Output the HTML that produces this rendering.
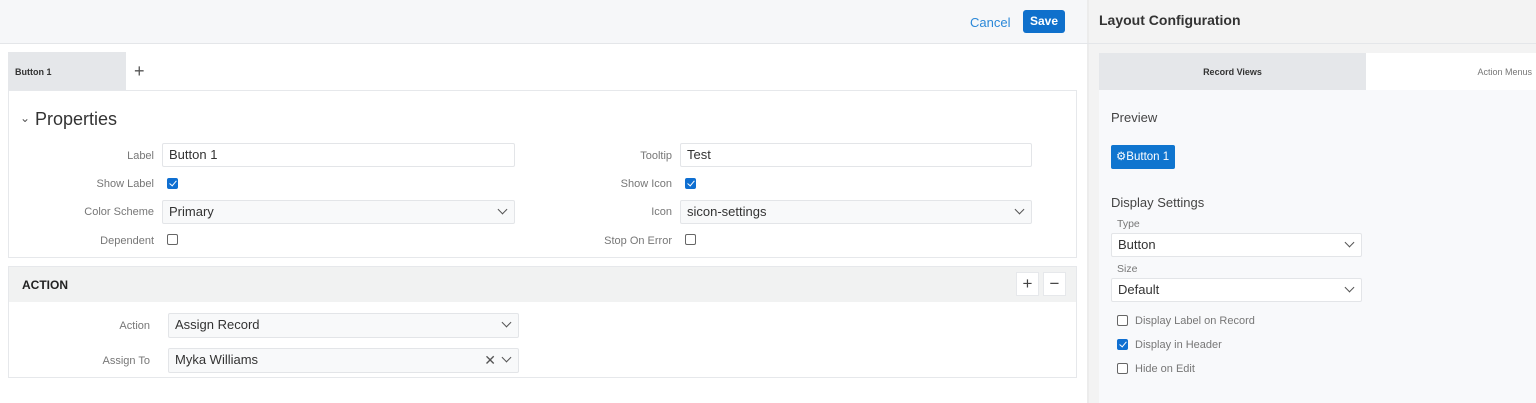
<!DOCTYPE html>
<html><head><style>
*{box-sizing:border-box;margin:0;padding:0}
body{width:1536px;height:403px;overflow:hidden;background:#fff;font-family:"Liberation Sans",sans-serif;position:relative;color:#333}
.a{position:absolute}
.lbl{position:absolute;font-size:11px;color:#777;text-align:right}
.inp{position:absolute;border:1px solid #e3e5e8;border-radius:2px;background:#fff;font-size:13px;color:#333;padding-left:6px;line-height:22px}
.sel{background:#f8f9fa}
.chev{position:absolute;right:8px;width:7px;height:7px;border-right:1.6px solid #555;border-bottom:1.6px solid #555;transform:rotate(45deg);top:5px}
.cb{position:absolute;width:11px;height:11px;border:1px solid #666;border-radius:2px;background:#fff}
.cb.on{background:#0f6fd1;border-color:#0f6fd1}
.cb.on:after{content:"";position:absolute;left:3px;top:0px;width:3px;height:6px;border-right:1.5px solid #fff;border-bottom:1.5px solid #fff;transform:rotate(40deg)}
</style></head><body>
<div class="a" style="left:0;top:0;width:1087px;height:44px;background:#f6f7f9;border-bottom:1px solid #e4e6e9"></div>
<div class="a" style="left:970px;top:15px;font-size:13px;color:#2b88d8">Cancel</div>
<div class="a" style="left:1023px;top:10px;width:42px;height:23px;background:#0f70cc;border-radius:3px;color:#fff;font-size:12px;font-weight:bold;text-align:center;line-height:23px">Save</div>

<div class="a" style="left:8px;top:52px;width:118px;height:38px;background:#e5e7ea;font-size:9px;font-weight:bold;color:#333;padding-left:7px;line-height:40px">Button 1</div>
<div class="a" style="left:134px;top:61px;font-size:18px;color:#555">+</div>

<div class="a" style="left:8px;top:90px;width:1069px;height:168px;border:1px solid #e6e8eb"></div>
<div class="a" style="left:20px;top:111px;font-size:12px;color:#555">⌄</div>
<div class="a" style="left:35px;top:109px;font-size:18px;color:#333">Properties</div>

<div class="lbl" style="left:40px;width:114px;top:150px">Label</div>
<div class="inp" style="left:162px;top:143px;width:353px;height:24px">Button 1</div>
<div class="lbl" style="left:40px;width:114px;top:178px">Show Label</div>
<div class="cb on" style="left:167px;top:178px"></div>
<div class="lbl" style="left:40px;width:114px;top:206px">Color Scheme</div>
<div class="inp sel" style="left:162px;top:200px;width:353px;height:24px">Primary<div class="chev"></div></div>
<div class="lbl" style="left:40px;width:114px;top:235px">Dependent</div>
<div class="cb" style="left:167px;top:234px"></div>

<div class="lbl" style="left:560px;width:112px;top:150px">Tooltip</div>
<div class="inp" style="left:680px;top:143px;width:352px;height:24px">Test</div>
<div class="lbl" style="left:560px;width:112px;top:178px">Show Icon</div>
<div class="cb on" style="left:685px;top:178px"></div>
<div class="lbl" style="left:560px;width:112px;top:206px">Icon</div>
<div class="inp sel" style="left:680px;top:200px;width:352px;height:24px">sicon-settings<div class="chev"></div></div>
<div class="lbl" style="left:560px;width:112px;top:235px">Stop On Error</div>
<div class="cb" style="left:685px;top:234px"></div>

<div class="a" style="left:8px;top:266px;width:1069px;height:112px;border:1px solid #e6e8eb"></div>
<div class="a" style="left:9px;top:267px;width:1067px;height:35px;background:#f1f2f2"></div>
<div class="a" style="left:22px;top:278px;font-size:12px;font-weight:bold;color:#222">ACTION</div>
<div class="a" style="left:1016px;top:272px;width:23px;height:24px;background:#fff;border:1px solid #e6e8eb;text-align:center;font-size:17px;line-height:22px;color:#444">+</div>
<div class="a" style="left:1043px;top:272px;width:23px;height:24px;background:#fff;border:1px solid #e6e8eb;text-align:center;font-size:17px;line-height:21px;color:#444">−</div>
<div class="lbl" style="left:40px;width:110px;top:320px">Action</div>
<div class="inp sel" style="left:168px;top:313px;width:351px;height:25px">Assign Record<div class="chev"></div></div>
<div class="lbl" style="left:40px;width:110px;top:355px">Assign To</div>
<div class="inp sel" style="left:168px;top:348px;width:351px;height:25px">Myka Williams<span style="position:absolute;right:22px;top:0;font-size:14px;color:#555">✕</span><div class="chev"></div></div>

<div class="a" style="left:1087px;top:0;width:449px;height:403px;background:#f3f3f3;border-left:2px solid #ececec"></div>
<div class="a" style="left:1087px;top:43px;width:449px;height:1px;background:#e4e6e9"></div>
<div class="a" style="left:1099px;top:12px;font-size:14px;font-weight:bold;color:#333">Layout Configuration</div>
<div class="a" style="left:1099px;top:53px;width:437px;height:350px;background:#f8f9fb"></div>
<div class="a" style="left:1099px;top:53px;width:267px;height:37px;background:#e5e7ea;font-size:9px;font-weight:bold;text-align:center;line-height:38px">Record Views</div>
<div class="a" style="left:1366px;top:53px;width:170px;height:37px;background:#fff;font-size:9px;color:#777;text-align:right;padding-right:4px;line-height:38px">Action Menus</div>
<div class="a" style="left:1111px;top:110px;font-size:13px;color:#444">Preview</div>
<div class="a" style="left:1111px;top:145px;width:64px;height:24px;background:#0f75cf;border-radius:2px;color:#fff;font-size:11.5px;line-height:24px;padding-left:5px">⚙Button 1</div>
<div class="a" style="left:1111px;top:195px;font-size:13px;color:#444">Display Settings</div>
<div class="a" style="left:1117px;top:218px;font-size:10.5px;color:#777">Type</div>
<div class="inp" style="left:1111px;top:233px;width:251px;height:24px">Button<div class="chev"></div></div>
<div class="a" style="left:1117px;top:263px;font-size:10.5px;color:#777">Size</div>
<div class="inp" style="left:1111px;top:278px;width:251px;height:24px">Default<div class="chev"></div></div>
<div class="cb" style="left:1117px;top:315px"></div>
<div class="a" style="left:1135px;top:315px;font-size:11px;color:#777">Display Label on Record</div>
<div class="cb on" style="left:1117px;top:339px"></div>
<div class="a" style="left:1135px;top:339px;font-size:11px;color:#777">Display in Header</div>
<div class="cb" style="left:1117px;top:363px"></div>
<div class="a" style="left:1135px;top:363px;font-size:11px;color:#777">Hide on Edit</div>
</body></html>
